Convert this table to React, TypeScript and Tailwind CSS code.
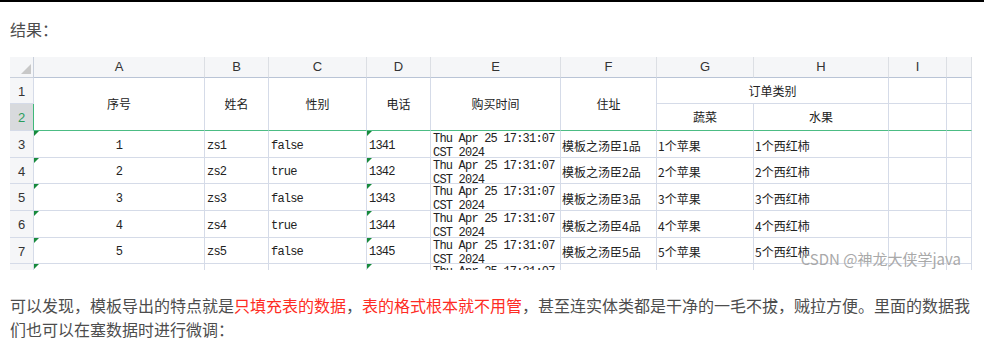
import React from "react";

const cols = ["A", "B", "C", "D", "E", "F", "G", "H", "I", ""];

const rows = [1, 2, 3, 4, 5].map((n) => ({
  seq: String(n),
  name: `zs${n}`,
  sex: n % 2 === 1 ? "false" : "true",
  phone: String(1340 + n),
  time: "Thu Apr 25 17:31:07 CST 2024",
  addr: `模板之汤臣${n}品`,
  veg: `${n}个苹果`,
  fruit: `${n}个西红柿`,
}));

const grid = "border-r border-b border-[#d5dbe8]";
const mono = "font-['Liberation_Mono',monospace] text-[12px] tracking-[-0.8px] text-[#222]";
const cjk = "font-['Noto_Sans_CJK_SC','Noto_Sans',sans-serif]";

// small green "number stored as text" marker in a cell's corner
function Flag() {
  return (
    <span className="absolute left-0 top-0 h-0 w-0 border-t-[5px] border-r-[5px] border-t-[#178a3c] border-r-transparent" />
  );
}

function RowHead({ n }: { n: number }) {
  return (
    <div className="flex items-center justify-center border-r border-b border-[#d5dbe8] bg-[#f5f6f8] pt-[2px] font-['Liberation_Sans',sans-serif] text-[13px] text-[#333]">
      {n}
    </div>
  );
}

function Sheet() {
  return (
    <div className="relative w-[962px] overflow-hidden bg-white">
      <div className="grid grid-cols-[24px_171px_64px_98px_64px_130px_96px_97px_135px_58px_25px] grid-rows-[21px_26px_27px_27px_26px_27px_27px_26px_6px]">
        {/* column header row */}
        <div className="relative border-r border-b border-[#c9d0dc] bg-[#f5f6f8]">
          <span className="absolute bottom-[3px] right-[2px] h-0 w-0 border-b-[10px] border-l-[10px] border-b-[#c8c8c8] border-l-transparent" />
        </div>
        {cols.map((c, i) => (
          <div
            key={i}
            className="flex items-center justify-center border-r border-b border-r-[#dcdfe4] border-b-[#b9c4d6] bg-[#f5f6f8] font-['Liberation_Sans',sans-serif] text-[13px] text-[#333]"
          >
            {c}
          </div>
        ))}

        {/* rows 1-2: merged headers */}
        <RowHead n={1} />
        {["序号", "姓名", "性别", "电话", "购买时间", "住址"].map((h) => (
          <div
            key={h}
            className={`row-span-2 flex items-center justify-center border-r border-b border-r-[#d5dbe8] border-b-[#4cbc84] text-[12px] text-[#222] ${cjk}`}
          >
            {h}
          </div>
        ))}
        <div className={`col-span-2 flex items-center justify-center ${grid} text-[12px] text-[#222] ${cjk}`}>
          订单类别
        </div>
        <div className={grid} />
        <div className={grid} />

        <div className="flex items-center justify-center border-r border-b border-r-[#3fb87a] border-b-[#d5dbe8] bg-[#d8dadd] pt-[2px] font-['Liberation_Sans',sans-serif] text-[13px] text-[#2a9d5c]">
          2
        </div>
        <div className={`flex items-center justify-center border-r border-b border-r-[#d5dbe8] border-b-[#4cbc84] text-[12px] text-[#222] ${cjk}`}>
          蔬菜
        </div>
        <div className={`flex items-center justify-center border-r border-b border-r-[#d5dbe8] border-b-[#4cbc84] text-[12px] text-[#222] ${cjk}`}>
          水果
        </div>
        <div className="border-r border-b border-r-[#d5dbe8] border-b-[#4cbc84]" />
        <div className="border-r border-b border-r-[#d5dbe8] border-b-[#4cbc84]" />

        {/* data rows */}
        {rows.map((r, i) => (
          <React.Fragment key={r.seq}>
            <RowHead n={i + 3} />
            <div className={`relative flex items-center justify-center pt-[3px] ${grid} ${mono}`}>
              <Flag />
              {r.seq}
            </div>
            <div className={`flex items-center pl-[2px] pt-[3px] ${grid} ${mono}`}>{r.name}</div>
            <div className={`flex items-center pl-[2px] pt-[3px] ${grid} ${mono}`}>{r.sex}</div>
            <div className={`relative flex items-center pl-[2px] pt-[3px] ${grid} ${mono}`}>
              <Flag />
              {r.phone}
            </div>
            <div className={`overflow-hidden pl-[2px] pt-[2px] leading-[13.5px] ${grid} ${mono}`}>{r.time}</div>
            <div className={`flex items-center pl-[1px] pt-[3px] ${grid} text-[12px] text-[#222] ${cjk}`}>{r.addr}</div>
            <div className={`flex items-center pl-[1px] pt-[3px] ${grid} text-[12px] text-[#222] ${cjk}`}>{r.veg}</div>
            <div className={`flex items-center pl-[1px] pt-[3px] ${grid} text-[12px] text-[#222] ${cjk}`}>{r.fruit}</div>
            <div className={grid} />
            <div className={grid} />
          </React.Fragment>
        ))}

        {/* row 8, cut off by the screenshot edge */}
        <div className="border-r border-[#d5dbe8] bg-[#f5f6f8]" />
        <div className="relative border-r border-[#d5dbe8]">
          <Flag />
        </div>
        <div className="border-r border-[#d5dbe8]" />
        <div className="border-r border-[#d5dbe8]" />
        <div className="relative border-r border-[#d5dbe8]">
          <Flag />
        </div>
        <div className={`overflow-hidden border-r border-[#d5dbe8] pl-[2px] pt-[2px] leading-[13.5px] ${mono}`}>
          Thu Apr 25 17:31:07
        </div>
        <div className="border-r border-[#d5dbe8]" />
        <div className="border-r border-[#d5dbe8]" />
        <div className="border-r border-[#d5dbe8]" />
        <div className="border-r border-[#d5dbe8]" />
        <div className="border-r border-[#d5dbe8]" />
      </div>

      {/* CSDN watermark */}
      <span className={`absolute bottom-[2px] right-[11px] text-[15px] leading-[18px] text-[#a9a9a9] ${cjk}`}>
        CSDN @神龙大侠学java
      </span>
    </div>
  );
}

export default function App() {
  return (
    <div className={`min-h-[345px] w-[988px] bg-white text-[16px] leading-[24px] text-[#4d4d4d] ${cjk}`}>
      <div className="h-[2px] w-[984px] bg-black" />
      <p className="mt-[15px] pl-[10px]">结果：</p>
      <div className="mt-[16px] pl-[10px]">
        <Sheet />
      </div>
      <p className="mt-[23px] w-[978px] pl-[10px]">
        可以发现，模板导出的特点就是
        <span className="text-[#fe2c24]">只填充表的数据</span>，
        <span className="text-[#fe2c24]">表的格式根本就不用管</span>
        ，甚至连实体类都是干净的一毛不拔，贼拉方便。里面的数据我们也可以在塞数据时进行微调：
      </p>
    </div>
  );
}
